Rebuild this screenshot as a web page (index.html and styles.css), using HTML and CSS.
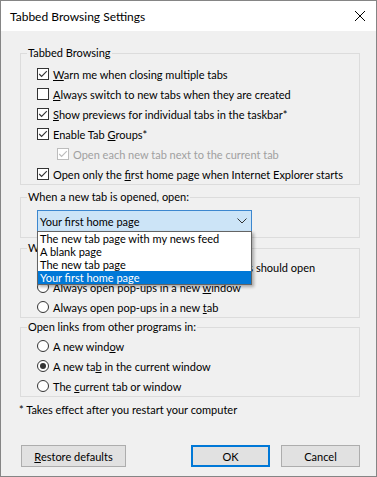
FILE: index.html
```html
<!DOCTYPE html>
<html lang="en">

<head>
    <meta charset="UTF-8">
    <meta name="viewport" content="width=device-width, initial-scale=1.0">
    <title>Tabbed Browsing Settings</title>
    <link rel="stylesheet" href="styles.css">
</head>

<body>
    <div class="window">
        <div class="titlebar">
            <span class="title">Tabbed Browsing Settings</span>
            <svg class="close" width="12" height="12" viewBox="0 0 12 12">
                <path d="M1 1 L11 11 M11 1 L1 11" stroke="#000" stroke-width="1" fill="none" />
            </svg>
        </div>

        <div class="content">
            <fieldset class="group group-tabs">
                <legend>Tabbed Browsing</legend>
                <div class="row">
                    <svg class="check" width="12" height="12" viewBox="0 0 12 12">
                        <rect x="0.5" y="0.5" width="11" height="11" fill="#fff" stroke="#333" />
                        <path d="M2.2 6 L4.6 8.4 L9.8 3.2" stroke="#333" stroke-width="1.1" fill="none" />
                    </svg>
                    <span><u>W</u>arn me when closing multiple tabs</span>
                </div>
                <div class="row">
                    <svg class="check" width="12" height="12" viewBox="0 0 12 12">
                        <rect x="0.5" y="0.5" width="11" height="11" fill="#fff" stroke="#333" />
                    </svg>
                    <span><u>A</u>lways switch to new tabs when they are created</span>
                </div>
                <div class="row">
                    <svg class="check" width="12" height="12" viewBox="0 0 12 12">
                        <rect x="0.5" y="0.5" width="11" height="11" fill="#fff" stroke="#333" />
                        <path d="M2.2 6 L4.6 8.4 L9.8 3.2" stroke="#333" stroke-width="1.1" fill="none" />
                    </svg>
                    <span><u>S</u>how previews for individual tabs in the taskbar*</span>
                </div>
                <div class="row">
                    <svg class="check" width="12" height="12" viewBox="0 0 12 12">
                        <rect x="0.5" y="0.5" width="11" height="11" fill="#fff" stroke="#333" />
                        <path d="M2.2 6 L4.6 8.4 L9.8 3.2" stroke="#333" stroke-width="1.1" fill="none" />
                    </svg>
                    <span>Enable Tab <u>G</u>roups*</span>
                </div>
                <div class="row row-sub disabled">
                    <svg class="check" width="12" height="12" viewBox="0 0 12 12">
                        <rect x="0.5" y="0.5" width="11" height="11" fill="#fff" stroke="#bcbcbc" />
                        <path d="M2.2 6 L4.6 8.4 L9.8 3.2" stroke="#bcbcbc" stroke-width="1.1" fill="none" />
                    </svg>
                    <span>Open each new tab next to the current tab</span>
                </div>
                <div class="row">
                    <svg class="check" width="12" height="12" viewBox="0 0 12 12">
                        <rect x="0.5" y="0.5" width="11" height="11" fill="#fff" stroke="#333" />
                        <path d="M2.2 6 L4.6 8.4 L9.8 3.2" stroke="#333" stroke-width="1.1" fill="none" />
                    </svg>
                    <span>Open only the <u>f</u>irst home page when Internet Explorer starts</span>
                </div>
            </fieldset>

            <fieldset class="group group-newtab">
                <legend>When a new tab is opened, open:</legend>
                <div class="combo">
                    <span>Your first home page</span>
                    <svg class="chevron" width="10" height="6" viewBox="0 0 10 6">
                        <path d="M0.5 0.5 L5 5 L9.5 0.5" stroke="#333" stroke-width="1" fill="none" />
                    </svg>
                    <ul class="dropdown">
                        <li>The new tab page with my news feed</li>
                        <li>A blank page</li>
                        <li>The new tab page</li>
                        <li class="selected">Your first home page</li>
                    </ul>
                </div>
            </fieldset>

            <fieldset class="group group-popups">
                <legend>When a pop-up is encountered:</legend>
                <div class="row">
                    <svg class="radio" width="12" height="12" viewBox="0 0 12 12">
                        <circle cx="6" cy="6" r="5.5" fill="#fff" stroke="#333" />
                        <circle cx="6" cy="6" r="3" fill="#333" />
                    </svg>
                    <span><u>L</u>et Internet Explorer decide how pop-ups should open</span>
                </div>
                <div class="row">
                    <svg class="radio" width="12" height="12" viewBox="0 0 12 12">
                        <circle cx="6" cy="6" r="5.5" fill="#fff" stroke="#333" />
                    </svg>
                    <span>Always open pop-ups in a new <u>w</u>indow</span>
                </div>
                <div class="row">
                    <svg class="radio" width="12" height="12" viewBox="0 0 12 12">
                        <circle cx="6" cy="6" r="5.5" fill="#fff" stroke="#333" />
                    </svg>
                    <span>Always open pop-ups in a new <u>t</u>ab</span>
                </div>
            </fieldset>

            <fieldset class="group group-links">
                <legend>Open links from other programs in:</legend>
                <div class="row">
                    <svg class="radio" width="12" height="12" viewBox="0 0 12 12">
                        <circle cx="6" cy="6" r="5.5" fill="#fff" stroke="#333" />
                    </svg>
                    <span>A new wind<u>o</u>w</span>
                </div>
                <div class="row">
                    <svg class="radio" width="12" height="12" viewBox="0 0 12 12">
                        <circle cx="6" cy="6" r="5.5" fill="#fff" stroke="#333" />
                        <circle cx="6" cy="6" r="3" fill="#333" />
                    </svg>
                    <span>A new ta<u>b</u> in the current window</span>
                </div>
                <div class="row">
                    <svg class="radio" width="12" height="12" viewBox="0 0 12 12">
                        <circle cx="6" cy="6" r="5.5" fill="#fff" stroke="#333" />
                    </svg>
                    <span>The <u>c</u>urrent tab or window</span>
                </div>
            </fieldset>

            <p class="note">* Takes effect after you restart your computer</p>

            <div class="buttons">
                <button class="btn btn-restore"><u>R</u>estore defaults</button>
                <button class="btn btn-ok">OK</button>
                <button class="btn btn-cancel">Cancel</button>
            </div>
        </div>
    </div>
</body>

</html>
```

FILE: styles.css
```css
body {
    margin: 0;
    font-family: Lato, "Liberation Sans", sans-serif;
    font-size: 11px;
    color: #000;
    background: #fff;
}

.window {
    width: 377px;
    height: 477px;
    box-sizing: border-box;
    border: 1px solid #858585;
    background: #f0f0f0;
    display: flex;
    flex-direction: column;
}

.titlebar {
    height: 30px;
    background: #fff;
    display: flex;
    align-items: center;
    justify-content: space-between;
    padding: 0 9px 0 9px;
}

.title {
    font-size: 12px;
}

.close {
    margin-right: 1px;
}

.content {
    flex: 1;
    display: flex;
    flex-direction: column;
    padding: 14px 16px 9px 19px;
}

.group {
    margin: 0;
    padding: 3px 6px 0 6px;
    border: 1px solid #dcdcdc;
    min-width: 0;
}

.group legend {
    padding: 0 1px;
    line-height: 16px;
}

.group-newtab {
    margin-top: 4px;
    padding-top: 5px;
    padding-bottom: 5px;
}

.group-popups {
    margin-top: 2px;
    padding-top: 1px;
}

.group-links {
    margin-top: 1px;
    padding-top: 1px;
}

.row {
    display: flex;
    align-items: center;
    gap: 4px;
    height: 20px;
    padding-left: 10px;
    white-space: nowrap;
}

.row-sub {
    padding-left: 30px;
}

.disabled {
    color: #a0a0a0;
}

.check,
.radio {
    flex: none;
}

.combo {
    position: relative;
    margin-left: 10px;
    width: 207px;
    height: 20px;
    border: 1px solid #3c87cf;
    background: #cce4f7;
    display: flex;
    align-items: center;
    justify-content: space-between;
    padding: 0 4px 0 2px;
}

.dropdown {
    position: absolute;
    z-index: 1;
    top: 20px;
    left: -1px;
    right: -1px;
    margin: 0;
    padding: 0;
    list-style: none;
    background: #fff;
    border: 1px solid #646464;
    box-shadow: 2px 2px 3px rgba(0, 0, 0, 0.3);
}

.dropdown li {
    height: 13px;
    line-height: 13px;
    padding-left: 2px;
    white-space: nowrap;
}

.dropdown .selected {
    background: #0078d7;
    color: #fff;
}

.note {
    margin: 5px 0 0 -1px;
    line-height: 16px;
}

.buttons {
    margin-top: auto;
    display: flex;
    gap: 11px;
    padding-left: 1px;
}

.btn {
    height: 22px;
    width: 79px;
    padding: 0;
    font-family: inherit;
    font-size: 11px;
    color: #000;
    background: #e1e1e1;
    border: 1px solid #adadad;
}

.btn-restore {
    width: 105px;
    margin-right: auto;
}

.btn-ok {
    border: 2px solid #0078d7;
}
```
